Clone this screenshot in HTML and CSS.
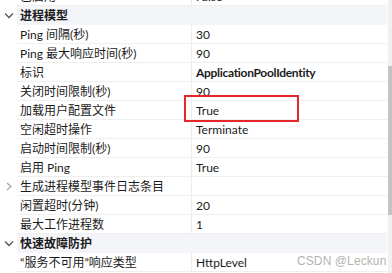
FILE: index.html
```html
<!DOCTYPE html>
<html>
<head>
<meta charset="utf-8">
<link rel="stylesheet" href="styles.css">
</head>
<body>
<div class="frame">
  <div class="grid">
    <div class="row"><div class="gut"></div><div class="name">已启用</div><div class="val">False</div></div>
    <div class="row cat"><div class="gut"><svg width="10" height="7" viewBox="0 0 10 7"><polyline points="1,1.5 5,5.5 9,1.5" fill="none" stroke="#555" stroke-width="1.3"/></svg></div><div class="name b">进程模型</div><div class="val"></div></div>
    <div class="row"><div class="gut"></div><div class="name">Ping 间隔(秒)</div><div class="val">30</div></div>
    <div class="row"><div class="gut"></div><div class="name">Ping 最大响应时间(秒)</div><div class="val">90</div></div>
    <div class="row"><div class="gut"></div><div class="name">标识</div><div class="val b tight">ApplicationPoolIdentity</div></div>
    <div class="row"><div class="gut"></div><div class="name">关闭时间限制(秒)</div><div class="val">90</div></div>
    <div class="row"><div class="gut"></div><div class="name">加载用户配置文件</div><div class="val">True</div></div>
    <div class="row"><div class="gut"></div><div class="name">空闲超时操作</div><div class="val">Terminate</div></div>
    <div class="row"><div class="gut"></div><div class="name">启动时间限制(秒)</div><div class="val">90</div></div>
    <div class="row"><div class="gut"></div><div class="name">启用 Ping</div><div class="val">True</div></div>
    <div class="row"><div class="gut"><svg width="6" height="9" viewBox="0 0 6 9"><polyline points="1,1 5,4.5 1,8" fill="none" stroke="#a8a8a8" stroke-width="1.3"/></svg></div><div class="name">生成进程模型事件日志条目</div><div class="val"></div></div>
    <div class="row"><div class="gut"></div><div class="name">闲置超时(分钟)</div><div class="val">20</div></div>
    <div class="row"><div class="gut"></div><div class="name">最大工作进程数</div><div class="val">1</div></div>
    <div class="row cat"><div class="gut"><svg width="10" height="7" viewBox="0 0 10 7"><polyline points="1,1.5 5,5.5 9,1.5" fill="none" stroke="#555" stroke-width="1.3"/></svg></div><div class="name b">快速故障防护</div><div class="val"></div></div>
    <div class="row"><div class="gut"></div><div class="name">“服务不可用”响应类型</div><div class="val">HttpLevel</div></div>
  </div>
  <div class="scroll"><div class="thumb"></div></div>
  <div class="mark"></div>
  <div class="wm">CSDN @Leckun</div>
</div>
</body>
</html>
```

FILE: styles.css
```css
html, body {
  margin: 0;
  padding: 0;
  background: #fff;
}
.frame {
  position: relative;
  width: 392px;
  height: 273px;
  overflow: hidden;
  display: flex;
  font-family: "Lato", "Noto Sans CJK SC", sans-serif;
  font-size: 12px;
  color: #1b1b1b;
}
.grid {
  width: 387px;
  margin-top: -13px;
  display: flex;
  flex-direction: column;
}
.row {
  display: flex;
  height: 19px;
  flex: none;
}
.gut {
  width: 17px;
  flex: none;
  background: #fff;
  display: flex;
  align-items: center;
  justify-content: center;
}
.gut svg { display: block; }
.name {
  width: 171px;
  flex: none;
  padding-left: 3px;
  padding-top: 1px;
  border-right: 1px solid #ececec;
  border-bottom: 1px solid #efefef;
  line-height: 18px;
  white-space: nowrap;
  overflow: hidden;
}
.val {
  flex: 1;
  padding-left: 4px;
  padding-top: 1px;
  border-bottom: 1px solid #efefef;
  line-height: 18px;
  white-space: nowrap;
  overflow: hidden;
}
.b { font-weight: bold; }
.tight { letter-spacing: -0.3px; }
.cat .name, .cat .val {
  background: #f3f5f9;
  border-right-color: #f3f5f9;
  border-bottom-color: #f3f5f9;
}
.scroll {
  width: 4px;
  margin-left: 1px;
  background: #f0f0f0;
  display: flex;
  flex-direction: column;
}
.thumb {
  margin-top: 66px;
  height: 149px;
  background: #c3c3c3;
}
.mark {
  position: absolute;
  left: 184px;
  top: 95px;
  width: 111px;
  height: 23px;
  border: 2px solid #e5262b;
}
.wm {
  position: absolute;
  left: 297px;
  top: 254px;
  font-family: "Liberation Sans", sans-serif;
  font-size: 12px;
  color: #b4b4b4;
  letter-spacing: 0.1px;
}
```
